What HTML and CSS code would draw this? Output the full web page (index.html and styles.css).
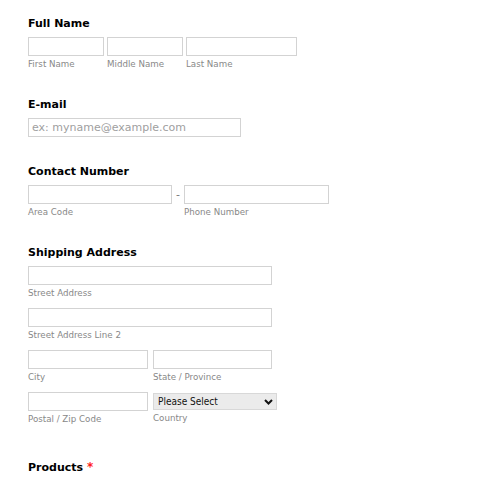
FILE: index.html
```html
<!DOCTYPE html>
<html>
<head>
    <title>Order Form</title>
    <link rel="stylesheet" href="styles.css">
</head>
<body>
    <form class="orderForm">
        <div class="formLine">
            <div class="formLabel">Full Name</div>
            <div class="fieldRow">
                <div class="subField">
                    <input type="text" class="textBox firstName">
                    <span class="subLabel">First Name</span>
                </div>
                <div class="subField">
                    <input type="text" class="textBox middleName">
                    <span class="subLabel">Middle Name</span>
                </div>
                <div class="subField">
                    <input type="text" class="textBox lastName">
                    <span class="subLabel">Last Name</span>
                </div>
            </div>
        </div>

        <div class="formLine">
            <div class="formLabel">E-mail</div>
            <input type="text" class="textBox email" placeholder="ex: myname@example.com">
        </div>

        <div class="formLine">
            <div class="formLabel">Contact Number</div>
            <div class="fieldRow phoneRow">
                <div class="subField">
                    <input type="text" class="textBox areaCode">
                    <span class="subLabel">Area Code</span>
                </div>
                <span class="phoneDash">-</span>
                <div class="subField">
                    <input type="text" class="textBox phoneNumber">
                    <span class="subLabel">Phone Number</span>
                </div>
            </div>
        </div>

        <div class="formLine">
            <div class="formLabel">Shipping Address</div>
            <div class="addressRows">
                <div class="subField">
                    <input type="text" class="textBox street">
                    <span class="subLabel">Street Address</span>
                </div>
                <div class="subField">
                    <input type="text" class="textBox street">
                    <span class="subLabel">Street Address Line 2</span>
                </div>
                <div class="fieldRow wide">
                    <div class="subField">
                        <input type="text" class="textBox half">
                        <span class="subLabel">City</span>
                    </div>
                    <div class="subField">
                        <input type="text" class="textBox halfRight">
                        <span class="subLabel">State / Province</span>
                    </div>
                </div>
                <div class="fieldRow wide">
                    <div class="subField">
                        <input type="text" class="textBox half">
                        <span class="subLabel">Postal / Zip Code</span>
                    </div>
                    <div class="subField">
                        <div class="selectWrap">
                            <select class="countrySelect">
                                <option>Please Select</option>
                            </select>
                            <svg class="chevron" width="9" height="6" viewBox="0 0 9 6">
                                <path d="M1 1 L4.5 4.5 L8 1" fill="none" stroke="#111" stroke-width="2"/>
                            </svg>
                        </div>
                        <span class="subLabel">Country</span>
                    </div>
                </div>
            </div>
        </div>

        <div class="formLine products">
            <div class="formLabel">Products <span class="required">*</span></div>
        </div>
    </form>
</body>
</html>
```

FILE: styles.css
```css
body {
    margin: 0;
    font-family: "DejaVu Sans", Verdana, sans-serif;
    background-color: #ffffff;
    color: #000000;
}

.orderForm {
    padding: 16px 0 0 28px;
}

.formLine {
    margin-bottom: 27px;
}

/* margins collapse with the line above */
.formLine.products {
    margin-top: 34px;
}

.formLabel {
    font-size: 11px;
    font-weight: bold;
    line-height: 16px;
    margin-bottom: 5px;
}

.required {
    color: #ff2020;
    font-size: 12px;
}

.fieldRow {
    display: flex;
    gap: 3px;
}

.fieldRow.wide {
    gap: 5px;
}

.fieldRow.phoneRow {
    gap: 4px;
}

.subField {
    display: flex;
    flex-direction: column;
}

.addressRows {
    display: flex;
    flex-direction: column;
    gap: 9px;
}

.textBox {
    display: block;
    box-sizing: border-box;
    height: 19px;
    margin: 0;
    padding: 0 3px;
    border: 1px solid #d3d3d3;
    font-family: "DejaVu Sans", Verdana, sans-serif;
    font-size: 11px;
    outline: none;
}

.textBox::placeholder {
    color: #a0a0a0;
}

.firstName, .middleName {
    width: 76px;
}

.lastName {
    width: 111px;
}

.email {
    width: 213px;
}

.areaCode {
    width: 144px;
}

.phoneDash {
    font-size: 11px;
    color: #777;
    line-height: 19px;
    width: 4px;
    text-align: center;
}

.phoneNumber {
    width: 145px;
}

.street {
    width: 244px;
}

.half {
    width: 120px;
}

.halfRight {
    width: 119px;
}

.subLabel {
    margin-top: 2px;
    font-size: 8.7px;
    line-height: 12px;
    color: #888888;
}

.selectWrap {
    position: relative;
    margin-top: 1px;
}

.countrySelect {
    appearance: none;
    -webkit-appearance: none;
    display: block;
    box-sizing: border-box;
    width: 124px;
    height: 17px;
    margin: 0;
    padding: 0 0 0 4px;
    border: 1px solid #d8d8d8;
    border-radius: 0;
    background-color: #ebebeb;
    font-family: "DejaVu Sans Condensed", "DejaVu Sans", sans-serif;
    font-size: 10px;
    color: #111;
    line-height: 15px;
}

.chevron {
    position: absolute;
    right: 4px;
    top: 6px;
}
```
